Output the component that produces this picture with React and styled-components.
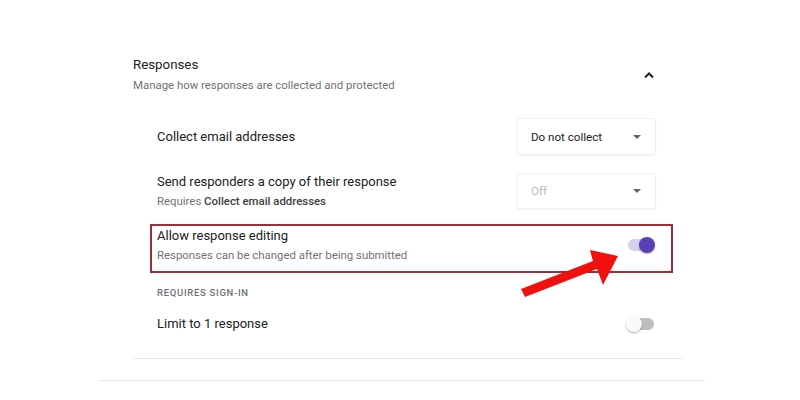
import React from 'react';
import styled, { createGlobalStyle } from 'styled-components';

const GlobalStyle = createGlobalStyle`
  body {
    margin: 0;
    background: #ffffff;
    font-family: Roboto, "Liberation Sans", Arial, sans-serif;
    color: #202124;
  }
`

const Page = styled.div`
  position: relative;
  width: 800px;
  height: 400px;
  overflow: hidden;
`

const Card = styled.div`
  margin-left: 98px;
  width: 607px;
  padding-bottom: 21px;
  border-bottom: 1px solid #e9e9e9;
`

const Section = styled.section`
  margin-left: 35px;
  width: 549px;
  padding-top: 56px;
  padding-bottom: 25px;
  border-bottom: 1px solid #e6e6e6;
`

const Header = styled.div`
  display: flex;
  justify-content: space-between;
  align-items: center;
  padding-right: 26px;
`

const Title = styled.div`
  font-size: 13.3px;
  line-height: 18px;
  color: #202124;
`

const Subtitle = styled.div`
  margin-top: 3px;
  font-size: 11.4px;
  line-height: 16px;
  color: #6f7378;
`

const Rows = styled.div`
  display: flex;
  flex-direction: column;
  margin-left: 24px;
  margin-right: 26px;
`

const Row = styled.div`
  position: relative;
  display: flex;
  justify-content: space-between;
  align-items: ${p => p.$align || 'center'};
  margin-top: ${p => p.$gap || 0}px;
`

const Label = styled.div`
  font-size: 13px;
  line-height: 18px;
  color: #202124;
`

const Hint = styled.div`
  margin-top: 3px;
  font-size: 11.4px;
  line-height: 14px;
  color: #6f7378;

  b {
    font-weight: 500;
    color: #3c4043;
  }
`

const GroupLabel = styled.div`
  margin-top: 24px;
  font-size: 9.5px;
  line-height: 14px;
  font-weight: 500;
  letter-spacing: 0.7px;
  color: #6f7378;
`

const Select = styled.div`
  box-sizing: border-box;
  display: flex;
  align-items: center;
  justify-content: space-between;
  width: 139px;
  height: ${p => p.$h || 37}px;
  padding: 0 14px 0 13px;
  border: 1px solid #f1f1f1;
  border-radius: 2px;
  box-shadow: 0 1px 2px rgba(0, 0, 0, 0.06);
  font-size: 11.6px;
  color: ${p => (p.$disabled ? '#b9b9b9' : '#202124')};
`

const Caret = styled.span`
  width: 0;
  height: 0;
  border-left: 4.5px solid transparent;
  border-right: 4.5px solid transparent;
  border-top: 4.5px solid #5f6368;
`

const Switch = styled.div`
  position: relative;
  width: 30px;
  height: 18px;
  flex-shrink: 0;

  &::before {
    content: '';
    position: absolute;
    left: 2px;
    right: 2px;
    top: 3px;
    height: 12px;
    border-radius: 6px;
    background: ${p => (p.$on ? '#d5d1ec' : '#bdbdbd')};
  }

  &::after {
    content: '';
    position: absolute;
    top: 1px;
    left: ${p => (p.$on ? '13px' : '0')};
    width: 16px;
    height: 16px;
    border-radius: 50%;
    background: ${p => (p.$on ? '#5b3fb5' : '#fafafa')};
    box-shadow: 0 1px 2px rgba(0, 0, 0, 0.3);
  }
`

const Highlight = styled.div`
  position: absolute;
  left: -7px;
  right: -17px;
  top: -3px;
  bottom: -11px;
  border: 2px solid #9f2d38;
  pointer-events: none;
`

const Arrow = styled.svg`
  position: absolute;
  left: 0;
  top: 0;
  pointer-events: none;
`

const ChevronUp = () => (
  <svg width="14" height="14" viewBox="0 0 14 14">
    <polyline points="3,9.5 7,5.5 11,9.5" fill="none" stroke="#202124" strokeWidth="2" />
  </svg>
)

export default function App() {
  return (
    <Page>
      <GlobalStyle />
      <Card>
        <Section>
          <Header>
            <div>
              <Title>Responses</Title>
              <Subtitle>Manage how responses are collected and protected</Subtitle>
            </div>
            <ChevronUp />
          </Header>

          <Rows>
            <Row $gap={25}>
              <Label>Collect email addresses</Label>
              <Select>
                Do not collect
                <Caret />
              </Select>
            </Row>

            <Row $gap={18} $align="flex-start">
              <div>
                <Label>Send responders a copy of their response</Label>
                <Hint>Requires <b>Collect email addresses</b></Hint>
              </div>
              <Select $disabled $h={36}>
                Off
                <Caret />
              </Select>
            </Row>

            <Row $gap={18}>
              <div>
                <Label>Allow response editing</Label>
                <Hint>Responses can be changed after being submitted</Hint>
              </div>
              <Switch $on />
              <Highlight />
            </Row>

            <GroupLabel>REQUIRES SIGN-IN</GroupLabel>

            <Row $gap={15}>
              <Label>Limit to 1 response</Label>
              <Switch />
            </Row>
          </Rows>
        </Section>
      </Card>

      <Arrow width="800" height="400" viewBox="0 0 800 400">
        <polygon
          points="521,289 593,261 590,250 618,256 603,285 597,269 525,297"
          fill="#f01010"
        />
      </Arrow>
    </Page>
  );
}
